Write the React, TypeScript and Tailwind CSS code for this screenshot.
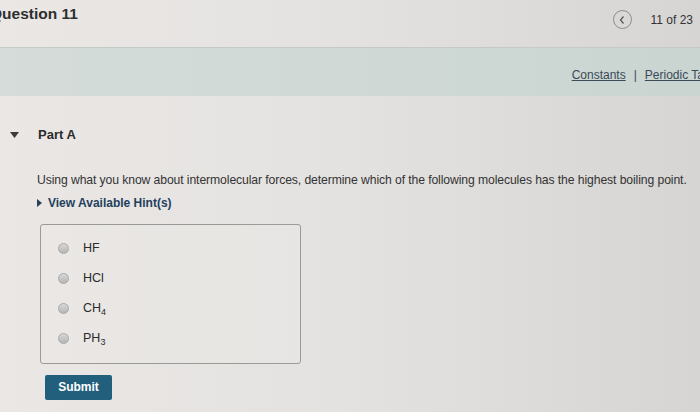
import React from 'react';

export default function App() {
    const options = [
        { label: 'HF', sub: '' },
        { label: 'HCl', sub: '' },
        { label: 'CH', sub: '4' },
        { label: 'PH', sub: '3' },
    ];

    return (
        <div
            className="w-[700px] h-[412px] overflow-hidden bg-gradient-to-r from-[#eae7e5] via-[#e4e2e0] to-[#d6d5d3] text-[#2b2b2b]"
            style={{ fontFamily: '"Liberation Sans", Arial, sans-serif' }}
        >
            {/* --- HEADER --- */}
            <div className="h-[47px] flex items-start justify-between pr-[7px]">
                <h1 className="text-[15.5px] font-bold mt-[2px] -ml-[10px] text-[#2e2e2e]">Question 11</h1>
                <div className="flex items-center gap-[19px] mt-[10px]">
                    <div className="w-[19px] h-[19px] rounded-full border border-[#8c8c8c] flex items-center justify-center">
                        <svg width="8" height="10" viewBox="0 0 8 10" fill="none">
                            <path d="M5.5 1.5 L2.5 5 L5.5 8.5" stroke="#555" strokeWidth="1.2" />
                        </svg>
                    </div>
                    <span className="text-[12px] text-[#333]">11 of 23</span>
                </div>
            </div>

            {/* --- TOOLBAR BAND --- */}
            <div className="h-[49px] bg-gradient-to-r from-[#d5dcd9] to-[#cad5d2] border-t border-[#c4cac8] flex items-center justify-end pt-[6px]">
                <div className="flex items-center gap-[8px] text-[12px] font-medium text-[#3a4a56] whitespace-nowrap -mr-[20px]">
                    <span className="underline">Constants</span>
                    <span>|</span>
                    <span className="underline">Periodic Table</span>
                </div>
            </div>

            {/* --- PART A --- */}
            <div className="flex items-center pt-[29px] pl-[10px]">
                <svg width="9" height="6" viewBox="0 0 9 6">
                    <path d="M0 0 H9 L4.5 6 Z" fill="#3a3a3a" />
                </svg>
                <span className="ml-[19px] text-[13px] font-bold text-[#2b2b2b]">Part A</span>
            </div>

            <div className="pl-[37px]">
                <p className="mt-[26px] text-[12.2px] tracking-[-0.1px] text-[#333] whitespace-nowrap">
                    Using what you know about intermolecular forces, determine which of the following molecules has the highest boiling point.
                </p>
                <div className="mt-[5px] flex items-center">
                    <svg width="5" height="8" viewBox="0 0 5 8">
                        <path d="M0 0 L5 4 L0 8 Z" fill="#2a3e55" />
                    </svg>
                    <span className="ml-[6px] text-[12px] font-bold text-[#24405c]">View Available Hint(s)</span>
                </div>

                {/* --- OPTIONS --- */}
                <div className="mt-[12px] ml-[3px] w-[261px] h-[140px] border border-[#9a9a98] rounded-[3px] bg-[#ebe9e7]/40 pt-[15px] pl-[17px] flex flex-col gap-[12px]">
                    {options.map((o) => (
                        <div key={o.label} className="flex items-center h-[18px]">
                            <span className="w-[11px] h-[11px] rounded-full bg-gradient-to-b from-[#d8d8d8] to-[#b5b5b5] border border-[#a8a8a8]"></span>
                            <span className="ml-[14px] text-[12.5px] text-[#2b2b2b]">
                                {o.label}
                                {o.sub && <sub className="text-[9px]">{o.sub}</sub>}
                            </span>
                        </div>
                    ))}
                </div>

                <button className="mt-[11px] ml-[8px] w-[67px] h-[25px] bg-[#215f7d] text-white text-[12px] font-bold rounded-[2px]">
                    Submit
                </button>
            </div>
        </div>
    );
}
